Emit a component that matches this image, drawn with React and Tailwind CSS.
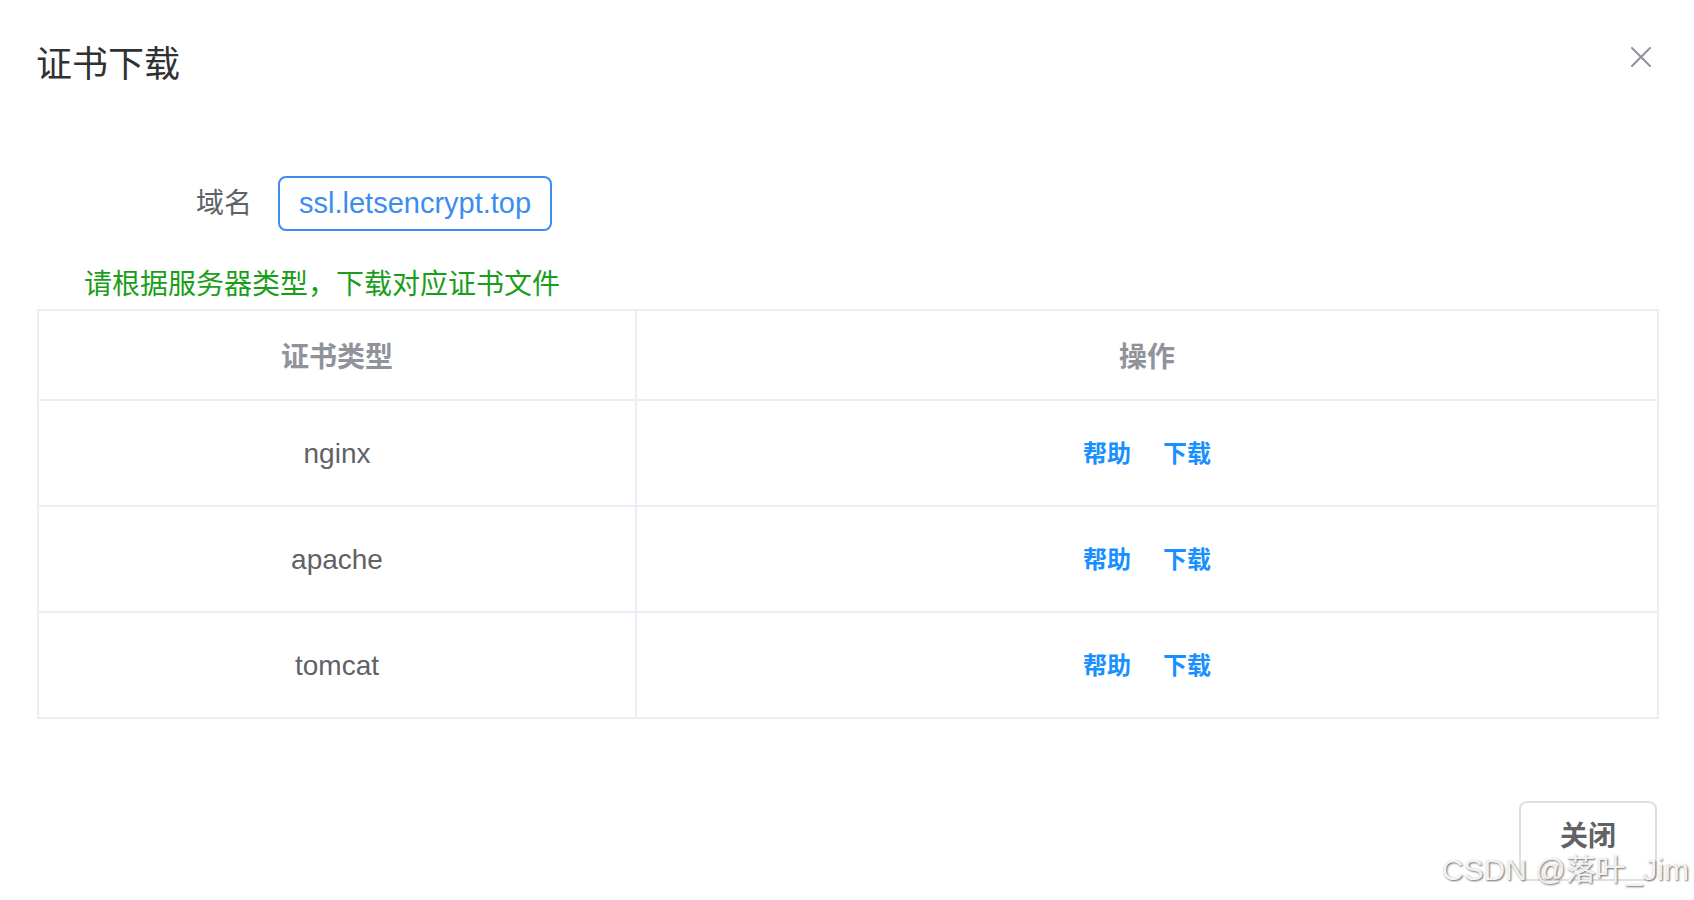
import { useState } from 'react'

const rows = ['nginx', 'apache', 'tomcat']

function CloseIcon() {
  return (
    <svg width="20" height="20" viewBox="0 0 20 20" className="block">
      <path d="M1 1 L19 19 M19 1 L1 19" stroke="#909399" strokeWidth="2" strokeLinecap="round" />
    </svg>
  )
}

export default function App() {
  const [domain] = useState('ssl.letsencrypt.top')

  return (
    <div className="relative w-[1694px] h-[900px] overflow-hidden bg-white font-['Liberation_Sans','Noto_Sans_CJK_SC',sans-serif]">
      {/* Dialog header */}
      <div className="flex items-start justify-between pl-[36px] pr-[43px] pt-[41px]">
        <h2 className="text-[36px] leading-[48px] text-[#303133]">证书下载</h2>
        <button className="mt-[6px]">
          <CloseIcon />
        </button>
      </div>

      {/* Domain */}
      <div className="flex items-center mt-[87px] pl-[40px]">
        <label className="w-[212px] text-right text-[28px] leading-[40px] text-[#606266]">域名</label>
        <div className="ml-[26px] h-[55px] px-[19px] flex items-center border-2 border-[#3c8dee] rounded-[8px] text-[29px] text-[#3c8dee]">
          {domain}
        </div>
      </div>

      <p className="mt-[34px] pl-[84px] text-[28px] leading-[40px] text-[#1a9e1a]">
        请根据服务器类型，下载对应证书文件
      </p>

      {/* Certificate table */}
      <div className="mt-[4px] ml-[37px] w-[1622px] border-2 border-[#ebeef5]">
        <div className="flex h-[90px] border-b-2 border-[#ebeef5]">
          <div className="w-[598px] border-r-2 border-[#ebeef5] flex items-center justify-center pt-[6px] text-[28px] font-bold text-[#909399]">
            证书类型
          </div>
          <div className="flex-1 flex items-center justify-center pt-[6px] text-[28px] font-bold text-[#909399]">
            操作
          </div>
        </div>
        {rows.map((name, i) => (
          <div
            key={name}
            className={`flex ${i < rows.length - 1 ? 'h-[106px] border-b-2 border-[#ebeef5]' : 'h-[104px]'}`}
          >
            <div className="w-[598px] border-r-2 border-[#ebeef5] flex items-center justify-center pt-[2px] text-[28px] text-[#606266]">
              {name}
            </div>
            <div className="flex-1 flex items-center justify-center gap-[32px] pt-[2px] text-[24px] font-bold text-[#1890ff]">
              <button>帮助</button>
              <button>下载</button>
            </div>
          </div>
        ))}
      </div>

      {/* Footer */}
      <div className="flex justify-end mt-[82px] pr-[37px]">
        <button className="w-[138px] h-[80px] pb-[8px] border-2 border-[#dcdfe6] rounded-[8px] text-[28px] font-semibold text-[#606266]">
          关闭
        </button>
      </div>

      {/* Watermark */}
      <div className="absolute right-[5px] bottom-[12px] text-[30px] leading-[36px] text-[#f2f2f2] [text-shadow:1px_1px_2px_#6b6b6b]">
        CSDN @落叶_Jim
      </div>
    </div>
  )
}
